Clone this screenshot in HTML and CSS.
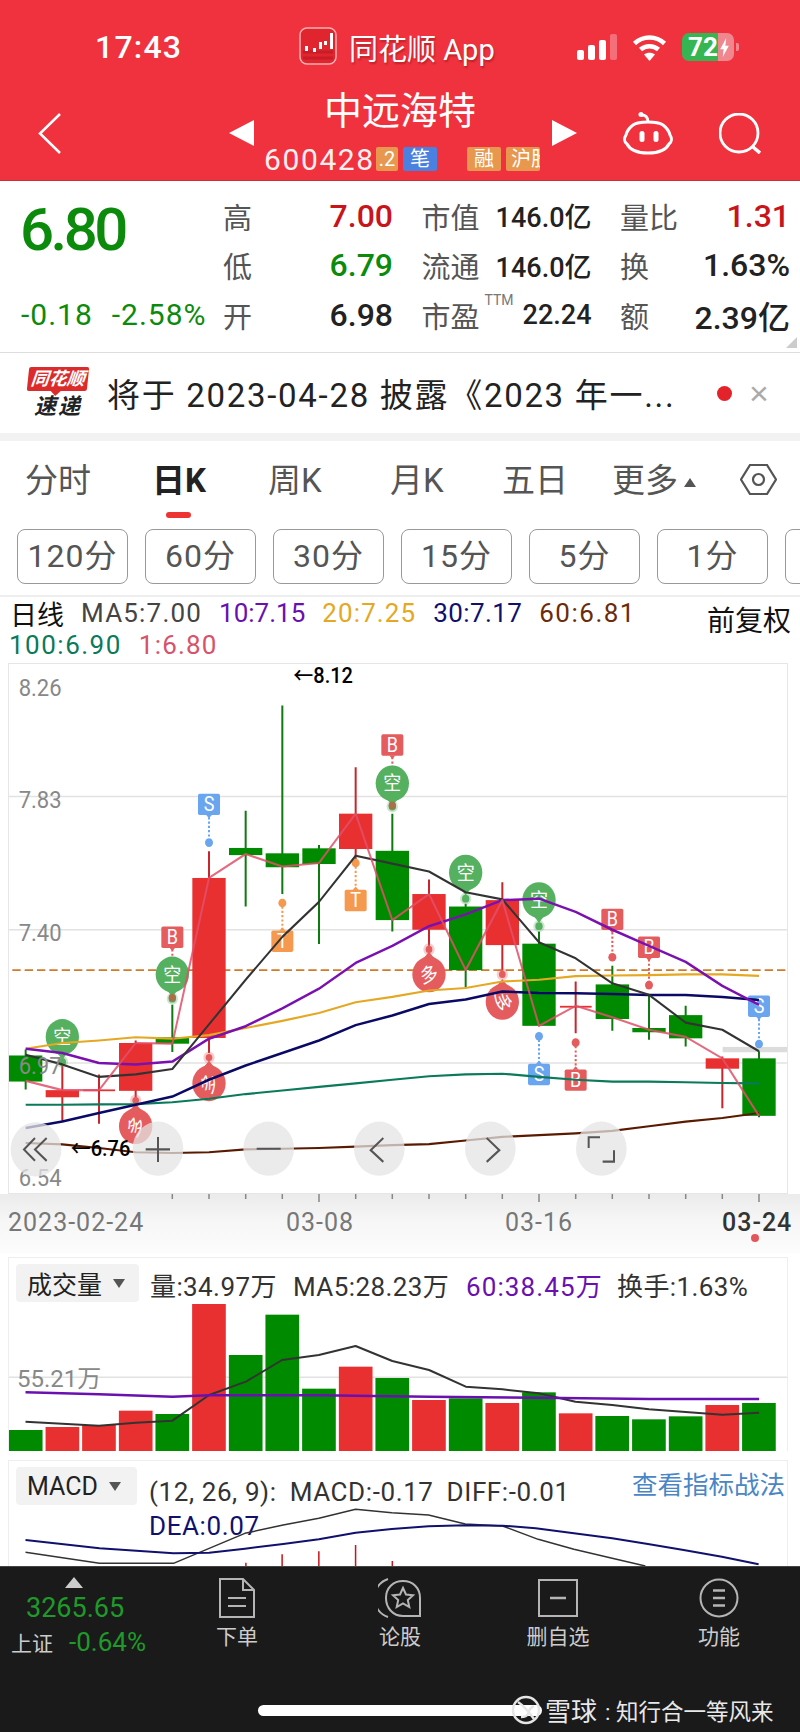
FILE: index.html
```html
<!DOCTYPE html>
<html>
<head>
<meta charset="UTF-8">
<title>中远海特</title>
<link rel="stylesheet" href="styles.css">
</head>
<body>
<div class="page">

  <header class="top">
    <div class="status">
      <span class="clock">17:43</span>
      <svg class="app-logo" viewBox="0 0 38 38">
        <rect x="1" y="1" width="36" height="36" rx="7" fill="#e0252f" stroke="#f6b0b0" stroke-width="1.5"/>
        <path d="M4 25h30M4 31h30" stroke="#c81c26" stroke-width="3"/>
        <path d="M6 19h3v5H6zM14 21h3v4h-3zM20 15h3v7h-3zM25 14h3v4h-3zM31 6h3v16h-3z" fill="#fff"/>
      </svg>
      <span class="app-name">同花顺 App</span>
      <span class="signal"><i class="s1"></i><i class="s2"></i><i class="s3"></i><i class="s4"></i></span>
      <svg class="wifi" viewBox="0 0 34 27" fill="none" stroke="#fff" stroke-width="4.5">
        <path d="M2 9.5C10.500 1.500 23.500 1.500 32 9.500"/>
        <path d="M8 15.500C13 11 21 11 26 15.500"/>
        <path d="M17 27l-5.500-6.500c3-2.500 8-2.500 11 0z" fill="#fff" stroke="none"/>
      </svg>
      <span class="battery">72<svg viewBox="0 0 10 22" class="bolt"><path d="M7 0L0 13h4l-1 9 7-13H6z" fill="#fff"/></svg></span>
    </div>
    <div class="nav">
      <svg class="back" viewBox="0 0 23 41" fill="none" stroke="#fff" stroke-width="2.500"><path d="M22 1L2 20.500 22 40"/></svg>
      <span class="tri tri-l"></span>
      <div class="stock">
        <div class="stock-name">中远海特</div>
        <div class="stock-code">
          <span class="code">600428</span>
          <span class="chip chip-o chip-a">.2</span>
          <span class="chip chip-b">笔</span>
          <span class="chip chip-o chip-c">融</span>
          <span class="chip chip-o chip-d"><b>沪股</b></span>
        </div>
      </div>
      <span class="tri tri-r"></span>
      <svg class="robot" viewBox="0 0 50 44" fill="none" stroke="#fff" stroke-width="3">
        <path d="M10 14C16 10 34 10 40 14 44 17 46 20 47 24 49 27 49 31 46 33 43 39 37 42 25 42 13 42 7 39 4 33 1 31 1 27 3 24 4 20 6 17 10 14Z"/>
        <path d="M25 11C25 6 22 4 19 4"/>
        <circle cx="18" cy="3.500" r="2.500" fill="#fff" stroke="none"/>
        <rect x="16.500" y="20" width="5" height="11" rx="2.500" fill="#fff" stroke="none"/>
        <rect x="30.500" y="20" width="5" height="11" rx="2.500" fill="#fff" stroke="none"/>
      </svg>
      <svg class="search" viewBox="0 0 42 41" fill="none" stroke="#fff" stroke-width="2.800"><circle cx="20" cy="20" r="19"/><path d="M34 34l7 6" stroke-width="3.500"/></svg>
    </div>
  </header>

  <section class="quote">
    <div class="price">
      <div class="last">6.80</div>
      <div class="change"><span>-0.18</span><span>-2.58%</span></div>
    </div>
    <div class="stats">
      <div class="stat"><span class="lab">高</span><span class="val big red">7.00</span></div>
      <div class="stat"><span class="lab">市值</span><span class="val">146.0亿</span></div>
      <div class="stat"><span class="lab">量比</span><span class="val big red">1.31</span></div>
      <div class="stat"><span class="lab">低</span><span class="val big green">6.79</span></div>
      <div class="stat"><span class="lab">流通</span><span class="val">146.0亿</span></div>
      <div class="stat"><span class="lab">换</span><span class="val big">1.63%</span></div>
      <div class="stat"><span class="lab">开</span><span class="val big">6.98</span></div>
      <div class="stat"><span class="lab lab-s">市盈<sup>TTM</sup></span><span class="val">22.24</span></div>
      <div class="stat"><span class="lab">额</span><span class="val big">2.39亿</span></div>
    </div>
    <span class="corner"></span>
  </section>

  <section class="notice">
    <div class="speed">
      <span class="speed-top">同花顺</span>
      <span class="speed-bot">速递</span>
    </div>
    <p class="notice-text">将于 2023-04-28 披露《2023 年一...</p>
    <span class="notice-dot"></span>
    <span class="notice-x">×</span>
  </section>

  <nav class="tabs">
    <span class="tab">分时</span>
    <span class="tab active">日K</span>
    <span class="tab">周K</span>
    <span class="tab">月K</span>
    <span class="tab">五日</span>
    <span class="tab">更多<i class="up-tri"></i></span>
    <svg class="hex" viewBox="0 0 37 31" fill="none" stroke="#555" stroke-width="2.200"><path d="M10 1h17l9 14.500L27 30H10L1 15.500z"/><circle cx="18.500" cy="15.500" r="5.500"/></svg>
  </nav>

  <div class="pills">
    <span class="pill">120分</span>
    <span class="pill">60分</span>
    <span class="pill">30分</span>
    <span class="pill">15分</span>
    <span class="pill">5分</span>
    <span class="pill">1分</span>
    <span class="pill"></span>
  </div>

  <div class="legend">
    <div class="legend-row">
      <span class="ma-day">日线</span>
      <span class="c-ma5">MA5:7.00</span>
      <span class="c-ma10">10:7.15</span>
      <span class="c-ma20">20:7.25</span>
      <span class="c-ma30">30:7.17</span>
      <span class="c-ma60">60:6.81</span>
      <span class="adjust">前复权</span>
    </div>
    <div class="legend-row row-2">
      <span class="c-ma100">100:6.90</span>
      <span class="c-ma1">1:6.80</span>
    </div>
  </div>

  <div class="kline">
    <svg class="kline-svg" viewBox="27 11 2334 1481" preserveAspectRatio="none">
      <path class="grid" d="M0 382H2400M0 755H2400M0 1128H2400"/>
      <path class="last-price" d="M0 868H2400"/>
      <rect class="marker-gray" x="2168" y="1083" width="198" height="15"/>

      <g class="c-red">
        <path d="M187 1120V1292M297 1160V1298M407 1065V1240M627 535V1100M1067 300V560M1287 614V800M1507 622V870M1727 900V1045M2167 1110V1255"/>
        <rect x="137" y="1204" width="100" height="20"/>
        <rect x="250" y="1202" width="95" height="5"/>
        <rect x="357" y="1072" width="100" height="134"/>
        <rect x="577" y="610" width="100" height="448"/>
        <rect x="1017" y="430" width="100" height="99"/>
        <rect x="1237" y="655" width="100" height="100"/>
        <rect x="1457" y="672" width="100" height="126"/>
        <rect x="1680" y="968" width="95" height="5"/>
        <rect x="2117" y="1115" width="100" height="29"/>
      </g>
      <g class="c-green">
        <path d="M77 1090V1202M517 965V1097M737 422V690M847 127V655M957 518V795M1177 430V760M1397 682V917M1617 760V1025M1837 856V1038M1947 935V1063M2057 968V1082M2277 1095V1280"/>
        <rect x="27" y="1107" width="100" height="73"/>
        <rect x="467" y="1056" width="100" height="18"/>
        <rect x="687" y="526" width="100" height="20"/>
        <rect x="797" y="541" width="100" height="39"/>
        <rect x="907" y="527" width="100" height="44"/>
        <rect x="1127" y="534" width="100" height="194"/>
        <rect x="1347" y="690" width="100" height="178"/>
        <rect x="1567" y="794" width="100" height="230"/>
        <rect x="1787" y="908" width="100" height="97"/>
        <rect x="1897" y="1030" width="100" height="12"/>
        <rect x="2007" y="994" width="100" height="65"/>
        <rect x="2227" y="1115" width="100" height="161"/>
      </g>

      <defs>
        <g id="tag-down"><rect x="-33" y="-30" width="66" height="60" rx="5"/><path d="M-9 29L0 39 9 29z"/></g>
        <g id="tag-up"><rect x="-33" y="-30" width="66" height="60" rx="5"/><path d="M-9 -29L0 -39 9 -29z"/></g>
        <g id="pin-down"><circle r="50"/><path d="M-20 44C-10 50-6 56 0 64 6 56 10 50 20 44z"/></g>
        <g id="pin-up"><circle r="50"/><path d="M-20 -44C-10 -50-6 -56 0 -64 6 -56 10 -50 20 -44z"/></g>
      </defs>

      <!-- S / B / T tags -->
      <g class="m-blue">
        <path class="dots" d="M627 440V500M1617 1063V1125M2277 1005V1065"/>
        <circle cx="627" cy="511" r="12"/><circle cx="1617" cy="1053" r="12"/><circle cx="2277" cy="1075" r="12"/>
        <use href="#tag-down" x="627" y="404"/><use href="#tag-up" x="1617" y="1160"/><use href="#tag-down" x="2277" y="969"/>
      </g>
      <g class="m-red">
        <path class="dots" d="M517 810V930M1177 272V395M1727 1081V1140M1837 762V822M1947 838V900"/>
        <circle cx="1727" cy="1071" r="12"/><circle cx="1837" cy="832" r="12"/><circle cx="1947" cy="910" r="12"/>
        <circle class="halo" cx="627" cy="1113" r="17"/><circle class="halo" cx="407" cy="1233" r="17"/><circle class="halo" cx="1287" cy="810" r="17"/><circle class="halo" cx="1507" cy="880" r="17"/>
        <circle cx="627" cy="1113" r="10"/><circle cx="407" cy="1233" r="10"/><circle cx="1287" cy="810" r="10"/><circle cx="1507" cy="880" r="10"/>
        <use href="#tag-down" x="517" y="776"/><use href="#tag-down" x="1177" y="238"/><use href="#tag-up" x="1727" y="1176"/>
        <use href="#tag-down" x="1837" y="726"/><use href="#tag-down" x="1947" y="804"/>
        <use href="#pin-up" x="627" y="1185"/><use href="#pin-up" x="407" y="1305"/><use href="#pin-up" x="1287" y="880"/><use href="#pin-up" x="1507" y="957"/>
      </g>
      <g class="m-orange">
        <path class="dots" d="M847 690V755M1067 578V640"/>
        <circle cx="847" cy="680" r="12"/><circle cx="1067" cy="568" r="12"/>
        <use href="#tag-up" x="847" y="787"/><use href="#tag-up" x="1067" y="673"/>
      </g>
      <g class="m-green">
        <circle class="halo" cx="187" cy="1125" r="17"/><circle class="halo" cx="1397" cy="668" r="17"/><circle class="halo" cx="1617" cy="745" r="17"/>
        <circle class="halo" cx="517" cy="948" r="17"/><circle class="halo" cx="1177" cy="410" r="17"/>
        <circle cx="187" cy="1125" r="11"/><circle cx="1397" cy="668" r="11"/><circle cx="1617" cy="745" r="11"/>
        <circle cx="517" cy="948" r="11"/><circle cx="1177" cy="410" r="11"/>
        <use href="#pin-down" x="187" y="1055"/><use href="#pin-down" x="517" y="880"/><use href="#pin-down" x="1177" y="345"/>
        <use href="#pin-down" x="1397" y="595"/><use href="#pin-down" x="1617" y="672"/>
      </g>
      <circle class="m-brown" cx="517" cy="945" r="11"/>
      <circle class="m-brown" cx="1177" cy="407" r="11"/>

      <g class="m-text">
        <text x="627" y="422">S</text><text x="1617" y="1178">S</text><text x="2277" y="987">S</text>
        <text x="517" y="794">B</text><text x="1177" y="256">B</text><text x="1727" y="1194">B</text><text x="1837" y="744">B</text><text x="1947" y="822">B</text>
        <text x="847" y="805">T</text><text x="1067" y="691">T</text>
        <text x="187" y="1075">空</text><text x="517" y="900">空</text><text x="1177" y="365">空</text><text x="1397" y="615">空</text><text x="1617" y="692">空</text>
        <text transform="rotate(-60 627 1185)" x="627" y="1205">多</text>
        <text transform="rotate(-50 407 1305)" x="407" y="1325">多</text>
        <text transform="rotate(-15 1287 880)" x="1287" y="900">多</text>
        <text transform="rotate(90 1507 957)" x="1507" y="977">多</text>
      </g>

      <polyline class="l-ma60" points="77,1352 187,1356 297,1366 407,1378 517,1380 627,1378 737,1370 847,1368 957,1366 1067,1362 1177,1358 1287,1355 1397,1345 1507,1335 1617,1330 1727,1325 1837,1318 1947,1305 2057,1292 2167,1282 2277,1268"/>
      <polyline class="l-ma100" points="77,1245 187,1245 297,1244 407,1243 517,1238 627,1228 737,1215 847,1205 957,1195 1067,1185 1177,1175 1287,1165 1397,1160 1507,1158 1617,1167 1727,1175 1837,1180 1947,1180 2057,1182 2167,1184 2277,1185"/>
      <polyline class="l-ma30" points="77,1310 187,1292 297,1268 407,1245 517,1222 627,1175 737,1135 847,1100 957,1065 1067,1022 1177,995 1287,963 1397,950 1507,928 1617,932 1727,933 1837,935 1947,938 2057,938 2167,943 2277,952"/>
      <polyline class="l-ma20" points="77,1088 187,1072 297,1065 407,1056 517,1060 627,1050 737,1030 847,1010 957,988 1067,958 1177,943 1287,925 1397,918 1507,900 1617,895 1727,885 1837,883 1947,882 2057,880 2167,880 2277,884"/>
      <polyline class="l-ma10" points="77,1088 187,1100 297,1128 407,1132 517,1124 627,1060 737,1025 847,975 957,920 1067,848 1177,800 1287,745 1397,712 1507,672 1617,668 1727,705 1837,755 1947,800 2057,845 2167,912 2277,965"/>
      <polyline class="l-ma5" points="77,1105 187,1132 297,1167 407,1160 517,1145 627,1020 737,895 847,775 957,677 1067,548 1177,570 1287,592 1397,650 1507,670 1617,790 1727,835 1837,905 1947,937 2057,1015 2167,1035 2277,1095"/>
      <polyline class="l-ma1" points="77,1178 187,1204 297,1204 407,1072 517,1074 627,610 737,543 847,578 957,568 1067,430 1177,728 1287,655 1397,868 1507,672 1617,1024 1727,968 1837,1000 1947,1035 2057,1055 2167,1115 2277,1276"/>

      <g class="axis-price">
        <text x="56" y="100">8.26</text>
        <text x="56" y="413">7.83</text>
        <text x="56" y="787">7.40</text>
        <text x="56" y="1160">6.97</text>
        <text x="56" y="1473">6.54</text>
      </g>
      <text class="extreme" x="880" y="63">←8.12</text>
      <text class="extreme" x="212" y="1388">←6.76</text>

      <g class="tool">
        <circle cx="108" cy="1370" r="76"/><circle cx="474" cy="1368" r="76"/><circle cx="806" cy="1368" r="76"/>
        <circle cx="1138" cy="1368" r="76"/><circle cx="1471" cy="1368" r="76"/><circle cx="1804" cy="1368" r="76"/>
      </g>
      <path class="tool-ico" d="M105 1338L72 1370 105 1402M140 1338L105 1370 140 1402M437 1370H510M474 1335V1405M770 1368H842M1150 1338L1112 1372 1150 1405M1460 1338L1498 1372 1460 1405M1766 1366V1336H1800M1842 1372V1404H1808"/>
    </svg>
  </div>

  <div class="axis">
    <svg class="ticks" viewBox="0 0 800 8">
      <path d="M172.300 0V5M209 0V5M245.700 0V5M282.300 0V5M319 0V8M355.700 0V5M392.300 0V5M429 0V5M465.700 0V5M502.300 0V5M539 0V8M575.700 0V5M612.300 0V5M649 0V5M685.700 0V5M722.300 0V5M759 0V8"/>
    </svg>
    <div class="dates">
      <span>2023-02-24</span>
      <span>03-08</span>
      <span>03-16</span>
      <span class="now">03-24</span>
    </div>
    <span class="axis-dot"></span>
  </div>

  <section class="panel vol">
    <div class="panel-head">
      <span class="drop">成交量<i></i></span>
      <div class="panel-info"><span>量:34.97万</span><span>MA5:28.23万</span><span class="c-ma10 info-60">60:38.45万</span><span>换手:1.63%</span></div>
    </div>
    <svg class="vol-svg" viewBox="17.64 312 1525 441" preserveAspectRatio="none">
      <path class="grid-s" d="M17 532H1545"/>
      <g class="b-green">
        <rect x="17.400" y="690" width="66" height="63"/>
        <rect x="304.700" y="642" width="66" height="111"/>
        <rect x="448.600" y="465" width="66" height="288"/>
        <rect x="520.300" y="344" width="66" height="409"/>
        <rect x="592.200" y="566" width="66" height="187"/>
        <rect x="735.900" y="534" width="66" height="219"/>
        <rect x="879.800" y="595" width="66" height="158"/>
        <rect x="1023.400" y="577" width="66" height="176"/>
        <rect x="1167" y="648" width="66" height="105"/>
        <rect x="1239" y="658" width="66" height="95"/>
        <rect x="1311" y="649" width="66" height="104"/>
        <rect x="1454.600" y="609" width="66" height="144"/>
      </g>
      <g class="b-red">
        <rect x="89.300" y="681" width="66" height="72"/>
        <rect x="161" y="675" width="66" height="78"/>
        <rect x="233" y="632" width="66" height="121"/>
        <rect x="376.600" y="312" width="66" height="441"/>
        <rect x="664.200" y="500" width="66" height="253"/>
        <rect x="807.800" y="600" width="66" height="153"/>
        <rect x="951.500" y="609" width="66" height="144"/>
        <rect x="1095.400" y="640" width="66" height="113"/>
        <rect x="1382.700" y="615" width="66" height="138"/>
      </g>
      <polyline class="vl-black" points="50,665 122,671 194,677 266,668 338,662 410,585 482,545 553,480 625,465 697,438 769,483 841,510 913,560 985,568 1056,580 1128,605 1200,615 1272,628 1344,636 1416,644 1488,638"/>
      <polyline class="vl-purple" points="50,577 194,583 338,590 410,586 625,586 841,590 1056,593 1272,597 1488,597"/>
    </svg>
    <span class="vol-label">55.21万</span>
  </section>

  <section class="panel macd">
    <div class="panel-head">
      <span class="drop drop-m">MACD<i></i></span>
      <div class="macd-info">
        <div class="macd-line"><span>(12, 26, 9):</span><span>MACD:-0.17</span><span>DIFF:-0.01</span></div>
        <div class="macd-dea">DEA:0.07</div>
      </div>
      <a class="macd-link">查看指标战法</a>
    </div>
    <svg class="macd-svg" viewBox="17.64 150 1525 198" preserveAspectRatio="none">
      <path class="m-bar" d="M482 338V348M553 313V348M625 304V348M697 285V348M769 333V348"/>
      <polyline class="vl-thin" points="50,307 195,340 340,340 480,250 555,225 625,205 697,178 768,188 840,195 912,222 985,228 1055,268 1125,298 1200,325 1265,348"/>
      <polyline class="vl-navy" points="50,270 195,295 340,310 410,308 480,296 555,282 625,268 697,248 768,237 840,229 912,226 985,227 1050,235 1125,250 1200,265 1270,282 1340,300 1415,320 1487,343"/>
    </svg>
  </section>

  <footer class="bottom">
    <div class="market">
      <i class="market-up"></i>
      <div class="market-idx">3265.65</div>
      <div class="market-row"><span class="market-name">上证</span><span class="market-pct">-0.64%</span></div>
    </div>
    <div class="act">
      <svg viewBox="0 0 40 40" fill="none" stroke="#b5b5b5" stroke-width="2"><path d="M3 1H26L37 12V39H3zM26 1V12H37M11 20H29M11 28H29"/></svg>
      <span>下单</span>
    </div>
    <div class="act">
      <svg viewBox="0 0 44 40" fill="none" stroke="#b5b5b5" stroke-width="2"><path d="M10 1A20 20 0 0 0 10 39"/><path d="M25 3C35 3 42 10 42 20V38H25C15 38 8 30 8 20 8 10 15 3 25 3Z"/><path d="M25 10l3 6.500 7 .7-5.200 4.800 1.500 7L25 25.500 18.700 29l1.500-7L15 17.200l7-.7z"/></svg>
      <span>论股</span>
    </div>
    <div class="act">
      <svg viewBox="0 0 40 40" fill="none" stroke="#b5b5b5" stroke-width="2"><rect x="1" y="2" width="38" height="36"/><path d="M12 20H28" stroke-width="2.500"/></svg>
      <span>删自选</span>
    </div>
    <div class="act">
      <svg viewBox="0 0 40 40" fill="none" stroke="#b5b5b5" stroke-width="2"><circle cx="20" cy="20" r="18.500"/><path d="M14 12.500H26M14 20H26M14 27.500H26" stroke-width="2.500"/></svg>
      <span>功能</span>
    </div>
    <span class="home-bar"></span>
    <div class="mark">
      <svg class="mark-logo" viewBox="0 0 30 30" fill="none" stroke="#e5e5e5" stroke-width="2.500"><circle cx="15" cy="15" r="13"/><path d="M7 7c6 4 11 10 16 17M23 11c-3 1-5 4-6 8-1 2-4 3-7 3"/></svg>
      <span class="mark-name">雪球</span>
      <span class="mark-user">: 知行合一等风来</span>
    </div>
  </footer>

</div>
</body>
</html>
```

FILE: styles.css
```css
html, body {
    margin: 0;
    padding: 0;
    background: #fff;
}
.page {
    width: 800px;
    height: 1732px;
    overflow: hidden;
    position: relative;
    font-family: Roboto, "Noto Sans CJK SC", sans-serif;
    color: #222;
}
i {font-style: normal;}

/* red header */
.top {
    background: #f0323f;
    height: 181px;
    box-sizing: border-box;
    border-bottom: 1px solid #c9303a;
    color: #fff;
}
.status {
    height: 76px;
    padding-top: 9px;
    display: flex;
    align-items: center;
    position: relative;
}
.clock {
    font-size: 32px;
    font-weight: 500;
    margin-left: 95px;
    width: 204px;
    letter-spacing: 1.200px;
}
.app-logo {
    width: 38px;
    height: 38px;
    margin-top: -2px;
}
.app-name {
    font-size: 29px;
    margin-left: 12px;
    width: 228px;
    color: #fff;
    text-shadow: 1px 2px 2px rgba(90, 0, 0, .35);
    white-space: nowrap;
}
.signal {
    display: flex;
    align-items: flex-end;
    gap: 4px;
    height: 26px;
    width: 55px;
}
.signal i {
    width: 7px;
    background: #fff;
    border-radius: 2px;
}
.s1 {height: 10px;}
.s2 {height: 15px;}
.s3 {height: 20px;}
.s4 {height: 26px; opacity: .3;}
.wifi {
    width: 35px;
    height: 27px;
    margin-right: 15px;
}
.battery {
    width: 52px;
    height: 28px;
    border-radius: 7px;
    background: linear-gradient(90deg, #35b653 70%, #f0878f 70%);
    font-size: 26px;
    font-weight: 700;
    line-height: 28px;
    padding-left: 6px;
    box-sizing: border-box;
    display: flex;
    align-items: center;
    position: relative;
}
.battery::after {
    content: "";
    position: absolute;
    left: 54px;
    top: 10px;
    width: 3px;
    height: 8px;
    border-radius: 0 2px 2px 0;
    background: #f0878f;
}
.bolt {
    width: 11px;
    height: 19px;
    margin-left: 1px;
}

.nav {
    height: 96px;
    display: flex;
    align-items: center;
}
.back {
    width: 23px;
    height: 41px;
    margin-left: 38px;
    margin-right: 168px;
}
.tri {
    width: 0;
    height: 0;
    border-top: 13px solid transparent;
    border-bottom: 13px solid transparent;
}
.tri-l {border-right: 25px solid #fff;}
.tri-r {border-left: 25px solid #fff;}
.stock {
    width: 298px;
    height: 96px;
}
.stock-name {
    font-size: 38px;
    line-height: 52px;
    text-align: center;
    padding-right: 6px;
}
.stock-code {
    display: flex;
    align-items: center;
    padding-left: 10px;
    margin-top: 10px;
    height: 24px;
}
.code {
    font-size: 30px;
    letter-spacing: 1.600px;
    width: 112px;
    opacity: .92;
}
.chip {
    display: block;
    height: 24px;
    line-height: 24px;
    font-size: 20px;
    text-align: center;
    overflow: hidden;
    width: 34px;
    border-radius: 2px;
    white-space: nowrap;
}
.chip-o {background: #e8974e;}
.chip-b {background: #4a80e0; margin-left: 5px;}
.chip-a {width: 22px;}
.chip-c {margin-left: 30px;}
.chip-d {margin-left: 5px; text-align: left;}
.chip-d b {font-weight: 400; padding-left: 5px;}
.robot {
    width: 50px;
    height: 44px;
    margin-left: 46px;
}
.search {
    width: 42px;
    height: 41px;
    margin-left: 46px;
}

/* quote */
.quote {
    height: 171px;
    border-bottom: 1px solid #ddd;
    display: flex;
    position: relative;
}
.price {
    width: 223px;
    flex-shrink: 0;
    color: #0b8a0b;
}
.last {
    font-size: 60px;
    font-weight: 500;
    line-height: 60px;
    margin: 19px 0 0 20px;
    letter-spacing: -3.500px;
}
.change {
    display: flex;
    font-size: 30px;
    line-height: 30px;
    margin: 40px 0 0 21px;
    gap: 19px;
    letter-spacing: 1px;
    white-space: nowrap;
}
.stats {
    display: grid;
    grid-template-columns: 170px 170px 170px;
    grid-auto-rows: 49.500px;
    column-gap: 28.500px;
    padding-top: 10px;
}
.stat {
    display: flex;
    justify-content: space-between;
    align-items: center;
    white-space: nowrap;
}
.lab {
    font-size: 29px;
    color: #555;
    position: relative;
}
.lab sup {
    position: absolute;
    left: 63px;
    top: -4px;
    font-size: 14px;
    color: #777;
    line-height: 20px;
}
.val {
    font-size: 27px;
    font-weight: 500;
    color: #222;
}
.big {font-size: 32px;}
.red {color: #c8141a;}
.green {color: #0b8a0b;}
.corner {
    position: absolute;
    right: 3px;
    bottom: 4px;
    width: 0;
    height: 0;
    border-left: 11px solid transparent;
    border-bottom: 11px solid #ccc;
}

/* notice */
.notice {
    height: 80px;
    border-bottom: 8px solid #f2f2f2;
    display: flex;
    align-items: center;
}
.speed {
    width: 62px;
    margin-left: 27px;
    display: flex;
    flex-direction: column;
    align-items: center;
}
.speed-top {
    display: block;
    width: 60px;
    height: 24px;
    background: #dc2b2b;
    border-radius: 2px;
    color: #fff;
    font-size: 18px;
    font-weight: 700;
    font-style: italic;
    line-height: 24px;
    text-align: center;
    transform: skewX(-6deg);
    position: relative;
}
.speed-top::after {
    content: "";
    position: absolute;
    left: 24px;
    top: 24px;
    width: 0;
    height: 0;
    border-left: 5px solid transparent;
    border-right: 5px solid transparent;
    border-top: 5px solid #dc2b2b;
}
.speed-bot {
    font-size: 22px;
    font-weight: 700;
    font-style: italic;
    line-height: 26px;
    margin-top: 3px;
    color: #222;
    letter-spacing: 2px;
}
.notice-text {
    margin: 0 0 0 18px;
    width: 610px;
    font-size: 33px;
    letter-spacing: 1.700px;
    color: #222;
    white-space: nowrap;
}
.notice-dot {
    width: 15px;
    height: 15px;
    background: #e4222a;
    border-radius: 50%;
}
.notice-x {
    font-size: 34px;
    color: #aaa;
    margin-left: 17px;
    font-family: "Liberation Sans", sans-serif;
}

/* period tabs */
.tabs {
    height: 88px;
    box-sizing: border-box;
    padding-left: 25px;
    display: grid;
    grid-template-columns: 127px 116px 122px 112px 110px 128px 40px;
    align-items: start;
}
.tab {
    font-size: 33px;
    line-height: 80px;
    color: #555;
    white-space: nowrap;
    position: relative;
}
.tab.active {
    color: #222;
    font-weight: 700;
}
.tab.active::after {
    content: "";
    position: absolute;
    left: 14px;
    top: 71px;
    width: 25px;
    height: 6px;
    background: #ee3333;
    border-radius: 3px;
}
.up-tri {
    display: inline-block;
    width: 0;
    height: 0;
    margin-left: 6px;
    border-left: 6px solid transparent;
    border-right: 6px solid transparent;
    border-bottom: 9px solid #555;
    vertical-align: 5px;
}
.hex {
    width: 37px;
    height: 31px;
    margin-top: 23px;
}

.pills {
    display: flex;
    gap: 17px;
    padding: 0 0 11px 17px;
    border-bottom: 2px solid #eee;
    overflow: hidden;
}
.pill {
    flex-shrink: 0;
    box-sizing: border-box;
    width: 111px;
    height: 55px;
    border: 1px solid #999;
    border-radius: 8px;
    font-size: 32px;
    line-height: 53px;
    text-align: center;
    color: #555;
    letter-spacing: 1px;
}

/* MA legend */
.legend {
    height: 66px;
    font-size: 26px;
}
.legend-row {
    display: flex;
    align-items: center;
    gap: 17px;
    height: 32px;
    padding-left: 10px;
    white-space: nowrap;
}
.row-2 {padding-left: 9px;}
.ma-day {color: #111; font-size: 27px;}
.c-ma5 {color: #444; letter-spacing: 1.200px;}
.c-ma10 {color: #6a10b0;}
.c-ma20 {color: #e5a823; letter-spacing: 1.100px;}
.c-ma30 {color: #10106e; letter-spacing: .4px;}
.c-ma60 {color: #6b2b0a; letter-spacing: 1.500px;}
.c-ma100 {color: #0a7a5a; letter-spacing: 1.500px;}
.c-ma1 {color: #d6536a; letter-spacing: 1.200px;}
.adjust {
    margin-left: auto;
    margin-top: 12px;
    margin-right: 9px;
    font-size: 28px;
    color: #111;
}

/* k-line */
.kline {
    margin-left: 8px;
    width: 780px;
    height: 531px;
    box-sizing: border-box;
    border: 1px solid #e6e6e6;
}
.kline-svg {
    display: block;
    width: 778px;
    height: 529px;
    overflow: hidden;
}
.grid {stroke: #e2e2e2; stroke-width: 4; fill: none;}
.last-price {stroke: #d07b2a; stroke-width: 5; stroke-dasharray: 25 12; fill: none;}
.marker-gray {fill: #dcdcdc;}
.c-red {fill: #e93030; stroke: none;}
.c-red path {stroke: #c8262c; stroke-width: 6; fill: none;}
.c-green {fill: #008a00;}
.c-green path {stroke: #0e7a10; stroke-width: 6; fill: none;}
.dots {fill: none; stroke-width: 6; stroke-dasharray: 6 6;}
.m-blue {fill: #6aa5ef;}
.m-blue .dots {stroke: #6aa5ef;}
.m-red {fill: #e55c5e;}
.m-red .dots {stroke: #e55c5e;}
.m-orange {fill: #f5994f;}
.m-orange .dots {stroke: #f5994f;}
.m-green {fill: #55b060;}
.m-brown {fill: #a8714a;}
.halo {fill-opacity: .3;}
.m-text {
    fill: #fff;
    font-size: 54px;
    text-anchor: middle;
}
polyline {fill: none; stroke-linejoin: round;}
.l-ma60 {stroke: #5a1a00; stroke-width: 6;}
.l-ma100 {stroke: #0a7a5a; stroke-width: 6;}
.l-ma30 {stroke: #0a0a66; stroke-width: 7;}
.l-ma20 {stroke: #e5a823; stroke-width: 6;}
.l-ma10 {stroke: #7a10b0; stroke-width: 7;}
.l-ma5 {stroke: #333; stroke-width: 6;}
.l-ma1 {stroke: #e0506a; stroke-width: 6; stroke-opacity: .85;}
.axis-price text {
    fill: #888;
    font-size: 66px;
}
.extreme {
    fill: #000;
    font-size: 60px;
    font-weight: 500;
}
.tool {fill: #e4e4e4; fill-opacity: .75;}
.tool-ico {fill: none; stroke: #555; stroke-width: 6;}

/* date axis */
.axis {
    height: 59px;
    background: linear-gradient(#ebebeb, #f6f6f6 45%, #fcfcfc);
    position: relative;
}
.ticks {
    display: block;
    width: 800px;
    height: 8px;
}
.ticks path {stroke: #888; stroke-width: 1.500; fill: none;}
.dates {
    display: grid;
    grid-template-columns: 278px 219px 217px 66px;
    padding-left: 8px;
    margin-top: 6px;
    font-size: 25px;
    line-height: 30px;
    color: #777;
    letter-spacing: 1px;
    white-space: nowrap;
}
.dates .now {
    color: #333;
    font-weight: 500;
}
.axis-dot {
    position: absolute;
    left: 751px;
    top: 40px;
    width: 8px;
    height: 8px;
    background: #e4555a;
    border-radius: 50%;
}

/* lower panels */
.panel {
    margin: 4px 0 0 8px;
    width: 780px;
    box-sizing: border-box;
    border: 1px solid #eee;
    border-bottom: 0;
    position: relative;
}
.vol {height: 194px;}
.macd {height: 106px; margin-top: 9px;}
.panel-head {
    display: flex;
    height: 46px;
    white-space: nowrap;
}
.drop {
    display: flex;
    align-items: center;
    margin: 6px 0 0 7px;
    width: 123px;
    height: 38px;
    background: #f2f2f2;
    border-radius: 4px;
    font-size: 25px;
    padding-left: 11px;
    box-sizing: border-box;
    color: #222;
}
.drop i {
    width: 0;
    height: 0;
    margin-left: 11px;
    border-left: 6px solid transparent;
    border-right: 6px solid transparent;
    border-top: 9px solid #555;
}
.drop-m {width: 121px;}
.panel-info {
    display: grid;
    grid-template-columns: 143px 173px 151px auto;
    margin: 12px 0 0 11px;
    font-size: 26px;
    letter-spacing: .4px;
    line-height: 34px;
    color: #333;
}
.info-60 {letter-spacing: 1.100px;}
.vol-svg {
    display: block;
    width: 778px;
    height: 147px;
    overflow: hidden;
}
.grid-s {stroke: #e2e2e2; stroke-width: 1.500; vector-effect: non-scaling-stroke; fill: none;}
.b-green {fill: #008a00;}
.b-red {fill: #e93030;}
.vl-black {stroke: #333; stroke-width: 2; vector-effect: non-scaling-stroke;}
.vl-purple {stroke: #6a10b0; stroke-width: 2.500; vector-effect: non-scaling-stroke;}
.vol-label {
    position: absolute;
    left: 8px;
    top: 106px;
    font-size: 24px;
    color: #888;
    line-height: 30px;
}
.macd-info {
    margin: 14px 0 0 12px;
    font-size: 26px;
    letter-spacing: .6px;
    line-height: 34px;
    color: #333;
}
.macd-line {display: flex; gap: 13px;}
.macd-dea {color: #10106e;}
.macd-link {
    margin: 6px 0 0 auto;
    padding-right: 2px;
    font-size: 25.500px;
    line-height: 36px;
    color: #4a86c5;
}
.macd-svg {
    position: absolute;
    left: 0;
    top: 39px;
    width: 778px;
    height: 66px;
    overflow: hidden;
}
.m-bar {stroke: #c8141a; stroke-width: 1.500; vector-effect: non-scaling-stroke; fill: none;}
.vl-thin {stroke: #333; stroke-width: 1.500; vector-effect: non-scaling-stroke;}
.vl-navy {stroke: #10106e; stroke-width: 2; vector-effect: non-scaling-stroke;}

/* bottom bar */
.bottom {
    height: 166px;
    box-sizing: border-box;
    background: #1a1a1a;
    border-top: 1px solid #444;
    display: grid;
    grid-template-columns: 187px 163px 158px 161px 100px;
    align-items: start;
    position: relative;
    color: #ccc;
}
.market {
    padding: 10px 0 0 11px;
    position: relative;
}
.market-up {
    display: block;
    width: 0;
    height: 0;
    margin-left: 54px;
    border-left: 9px solid transparent;
    border-right: 9px solid transparent;
    border-bottom: 11px solid #ccc;
}
.market-idx {
    font-size: 27px;
    line-height: 34px;
    margin: 3px 0 0 15px;
    color: #1f9a2a;
}
.market-row {
    display: flex;
    align-items: center;
    margin-top: 2px;
    gap: 16px;
    white-space: nowrap;
}
.market-name {font-size: 21px;}
.market-pct {font-size: 26px; color: #1f9a2a;}
.act {
    width: 100px;
    display: flex;
    flex-direction: column;
    align-items: center;
    padding-top: 11px;
    font-size: 21px;
}
.act svg {
    height: 40px;
    width: 44px;
}
.act span {
    line-height: 30px;
    margin-top: 4px;
}
.home-bar {
    position: absolute;
    left: 258px;
    top: 138px;
    width: 284px;
    height: 11px;
    border-radius: 6px;
    background: #fff;
}
.mark {
    position: absolute;
    left: 511px;
    top: 124px;
    display: flex;
    align-items: center;
    color: #e8e8e8;
    white-space: nowrap;
    gap: 4px;
}
.mark-logo {
    width: 30px;
    height: 30px;
}
.mark-name {font-size: 26px;}
.mark-user {font-size: 22.500px; margin-left: 4px;}
```
